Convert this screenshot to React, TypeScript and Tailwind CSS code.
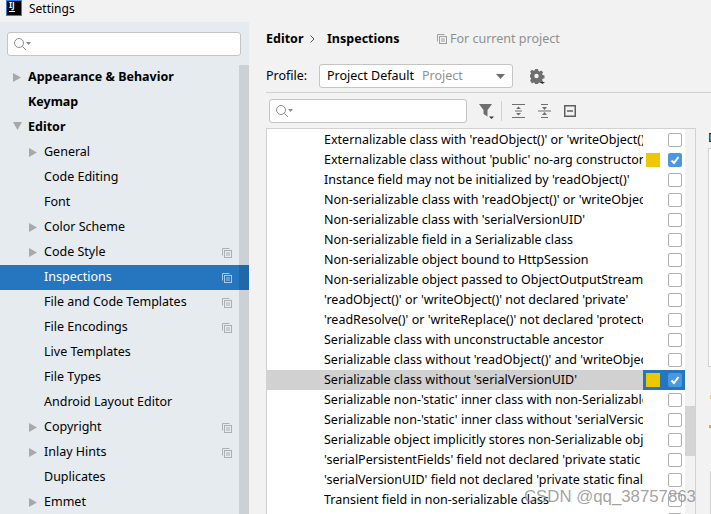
const font = { fontFamily: '"Noto Sans", sans-serif' };

type NavItem = { label: string; arrow?: "right" | "down"; copy?: boolean; bold?: boolean; active?: boolean };

const nav: NavItem[] = [
  { label: "Appearance & Behavior", arrow: "right", bold: true },
  { label: "Keymap", bold: true },
  { label: "Editor", arrow: "down", bold: true },
  { label: "General", arrow: "right" },
  { label: "Code Editing" },
  { label: "Font" },
  { label: "Color Scheme", arrow: "right" },
  { label: "Code Style", arrow: "right", copy: true },
  { label: "Inspections", copy: true, active: true },
  { label: "File and Code Templates", copy: true },
  { label: "File Encodings", copy: true },
  { label: "Live Templates" },
  { label: "File Types" },
  { label: "Android Layout Editor" },
  { label: "Copyright", arrow: "right", copy: true },
  { label: "Inlay Hints", arrow: "right", copy: true },
  { label: "Duplicates" },
  { label: "Emmet", arrow: "right" },
];

const rows = [
  { text: "Externalizable class with 'readObject()' or 'writeObject()'" },
  { text: "Externalizable class without 'public' no-arg constructor", on: true },
  { text: "Instance field may not be initialized by 'readObject()'" },
  { text: "Non-serializable class with 'readObject()' or 'writeObject()'" },
  { text: "Non-serializable class with 'serialVersionUID'" },
  { text: "Non-serializable field in a Serializable class" },
  { text: "Non-serializable object bound to HttpSession" },
  { text: "Non-serializable object passed to ObjectOutputStream" },
  { text: "'readObject()' or 'writeObject()' not declared 'private'" },
  { text: "'readResolve()' or 'writeReplace()' not declared 'protected'" },
  { text: "Serializable class with unconstructable ancestor" },
  { text: "Serializable class without 'readObject()' and 'writeObject()'" },
  { text: "Serializable class without 'serialVersionUID'", on: true, selected: true },
  { text: "Serializable non-'static' inner class with non-Serializable outer" },
  { text: "Serializable non-'static' inner class without 'serialVersionUID'" },
  { text: "Serializable object implicitly stores non-Serializable object" },
  { text: "'serialPersistentFields' field not declared 'private static final'" },
  { text: "'serialVersionUID' field not declared 'private static final long'" },
  { text: "Transient field in non-serializable class" },
  { text: "" },
];

function CopyIcon({ color = "#a9b0b6" }: { color?: string }) {
  return (
    <svg width="10" height="10" viewBox="0 0 10 10" fill="none" stroke={color}>
      <path d="M0.5 7.500V0.500H7.500" />
      <rect x="2.500" y="2.500" width="7" height="7" />
      <path d="M4 5H8M4 7H8" />
    </svg>
  );
}

function SearchIcon() {
  return (
    <svg width="18" height="14" viewBox="0 0 18 14" fill="none" stroke="#8c8c8c">
      <circle cx="6" cy="6" r="4.500" />
      <path d="M9.500 9.500L13 13" />
      <path d="M13 5h5l-2.500 3z" fill="#8c8c8c" stroke="none" />
    </svg>
  );
}

function Checkbox({ on }: { on?: boolean }) {
  if (on) {
    return (
      <div className="flex h-[14px] w-[14px] items-center justify-center rounded-[2px] bg-[#4a98e3]">
        <svg width="10" height="10" viewBox="0 0 10 10" fill="none" stroke="#ffffff" strokeWidth="2">
          <path d="M1.500 5.500L4 8L8.500 2" />
        </svg>
      </div>
    );
  }
  return <div className="h-[14px] w-[14px] rounded-[2px] border border-[#b0b0b0] bg-white" />;
}

export default function App() {
  return (
    <div className="relative flex h-[514px] w-[711px] flex-col overflow-hidden bg-[#f2f2f2] text-[12.5px] text-black" style={font}>
      {/* Title bar */}
      <div className="flex h-[22px] items-center gap-[7px] pl-[6px]">
        <div className="mb-[6px] flex h-[16px] w-[16px] flex-col border border-[#2f7fd6] bg-black px-[2px] text-white">
          <span className="text-[8px] font-bold leading-[8px]">IJ</span>
          <span className="mt-[2px] h-px w-[6px] bg-white" />
        </div>
        <span className="mb-[4px] text-[12px]">Settings</span>
      </div>

      <div className="flex min-h-0 flex-1">
        {/* Sidebar */}
        <div className="flex w-[249px] shrink-0 flex-col bg-[#e6ebf0]">
          <div className="flex h-[43px] items-start px-[7px] pt-[10px]">
            <div className="flex h-[24px] w-[234px] items-center rounded-[3px] border border-[#c4c4c4] bg-white pl-[5px]">
              <SearchIcon />
            </div>
          </div>
          <div className="relative min-h-0 flex-1">
            {nav.map((item) => (
              <NavRow key={item.label} item={item} />
            ))}
            {/* scrollbar sits over the rows */}
            <div className="absolute bottom-0 right-0 top-0 w-[10px] bg-black/[0.11]" />
          </div>
        </div>

        {/* Main */}
        <div className="flex min-w-0 flex-1 flex-col">
          <div className="flex h-[30px] items-end pl-[17px] leading-[26px]">
            <span className="w-[44px] font-bold">Editor</span>
            <span className="mb-[9px] w-[17px]">
              <svg width="5" height="8" viewBox="0 0 5 8" fill="none" stroke="#555555">
                <path d="M.500 .500L4 4L.500 7.500" />
              </svg>
            </span>
            <span className="w-[110px] font-bold">Inspections</span>
            <span className="mb-[8px] mr-[3px]">
              <CopyIcon color="#a0a0a0" />
            </span>
            <span className="text-[#8f8f8f]">For current project</span>
          </div>

          <div className="mt-[12px] flex h-[24px] items-center pl-[17px]">
            <span className="w-[53px] pt-px">Profile:</span>
            <div className="flex h-[24px] w-[194px] items-center rounded-[3px] border border-[#c4c4c4] bg-white pl-[7px]">
              <span className="pt-px">Project Default</span>
              <span className="ml-[8px] pt-px text-[#8f8f8f]">Project</span>
              <svg className="ml-auto mr-[7px]" width="9" height="5" viewBox="0 0 9 5">
                <path d="M0 0h9L4.500 5z" fill="#6e6e6e" />
              </svg>
            </div>
            <svg className="ml-[17px]" width="15" height="15" viewBox="0 0 15 15">
              <path
                d="M5.200 0h2.800l.4 1.900 1.200.5 1.600-1 1.900 1.900-1 1.600.5 1.200 1.900.4v2.800l-1.900.4-.5 1.200 1 1.600-1.900 1.900-1.600-1-1.200.5-.4 1.700H5.200l-.4-1.700-1.200-.5-1.600 1L.1 11.400l1-1.600-.5-1.200L0 8.400V5.800l.6-.4.500-1.200-1-1.600L2 .7l1.600 1 1.200-.5z"
                fill="#6e6e6e"
              />
              <circle cx="6.500" cy="7" r="2.200" fill="#f2f2f2" />
              <path d="M10 13h5l-2.500 2z" fill="#333333" />
            </svg>
          </div>

          <div className="ml-[17px] mt-[4px] h-px bg-[#d1d1d1]" />

          <div className="mt-[6px] flex h-[24px] items-center pl-[20px]">
            <div className="flex h-[24px] w-[198px] items-center rounded-[3px] border border-[#c4c4c4] bg-white pl-[5px]">
              <SearchIcon />
            </div>
            <svg className="ml-[12px]" width="15" height="15" viewBox="0 0 15 15">
              <path d="M0 0h13L8.500 6v6.500l-4-2.500V6z" fill="#6e6e6e" />
              <path d="M10 12.500h5L12.500 15z" fill="#333333" />
            </svg>
            <div className="ml-[7px] h-[20px] w-px bg-[#d1d1d1]" />
            <svg className="ml-[10px]" width="13" height="14" viewBox="0 0 13 14" fill="none" stroke="#6e6e6e">
              <path d="M0 .500h13M0 13.500h13M3 7h7" />
              <path d="M6.500 2.500L9 5H4zM6.500 11.500L4 9h5z" fill="#6e6e6e" stroke="none" />
            </svg>
            <svg className="ml-[13px]" width="13" height="14" viewBox="0 0 13 14" fill="none" stroke="#6e6e6e">
              <path d="M0 7h13M3 .500h7M3 13.500h7" />
              <path d="M6.500 6L4 3h5zM6.500 8L9 11H4z" fill="#6e6e6e" stroke="none" />
            </svg>
            <svg className="ml-[13px]" width="12" height="12" viewBox="0 0 12 12" fill="none" stroke="#5f5f5f" strokeWidth="1.500">
              <rect x=".750" y=".750" width="10.500" height="10.500" />
              <path d="M3 6h6" />
            </svg>
          </div>

          {/* Inspection list */}
          <div className="ml-[17px] mt-[5px] flex min-h-0 flex-1">
            <div className="flex w-[430px] shrink-0 border-l border-r border-t border-[#d1d1d1]">
              <div className="w-[418px] shrink-0 overflow-hidden bg-white pt-px">
                {rows.map((row, i) => (
                  <InspectionRow key={i} {...row} />
                ))}
              </div>
              <div className="flex-1 pt-[277px]">
                <div className="h-[50px] bg-[#d4d4d4]" />
              </div>
            </div>
            {/* Description column, cut off by the window edge */}
            <div className="ml-[12px] min-w-0 flex-1 overflow-hidden">
              <div className="h-[20px] whitespace-nowrap leading-[20px]">Description</div>
              <div className="h-[219px] border-l border-t border-b border-[#d1d1d1] bg-white" />
              <div className="ml-[2px] mt-[28px] h-[4px] w-[1px] bg-[#f2c56a]" />
              <div className="ml-[1px] mt-[26px] h-[3px] w-[2px] bg-[#f0a030]" />
              <div className="ml-[2px] mt-[43px] h-[44px] w-[1px] bg-[#d1d1d1]" />
            </div>
          </div>
        </div>
      </div>

      {/* Watermark */}
      <div
        className="pointer-events-none absolute left-[524px] top-[487px] text-[16.800px] leading-[20px] text-[#8a8a8a]/80"
        style={{ fontFamily: '"Liberation Sans", sans-serif' }}
      >
        CSDN @qq_38757863
      </div>
    </div>
  );
}

function NavRow({ item }: { item: NavItem }) {
  const indent = item.bold ? "pl-[28px]" : "pl-[44px]";
  const arrowLeft = item.bold ? "left-[13px]" : "left-[29px]";
  return (
    <div
      className={`relative flex h-[25px] items-center pr-[17px] ${indent} ${
        item.active ? "bg-[#2675bf] text-white" : ""
      } ${item.bold ? "font-bold" : ""}`}
    >
      {item.arrow === "right" && (
        <svg className={`absolute ${arrowLeft} top-[8px]`} width="8" height="9" viewBox="0 0 8 9">
          <path d="M0 0l8 4.500L0 9z" fill="#a8a8a8" />
        </svg>
      )}
      {item.arrow === "down" && (
        <svg className={`absolute ${arrowLeft} top-[7px]`} width="9" height="8" viewBox="0 0 9 8">
          <path d="M0 0h9L4.500 8z" fill="#a8a8a8" />
        </svg>
      )}
      <span className="flex-1 truncate">{item.label}</span>
      {item.copy && <CopyIcon color={item.active ? "#a9cbe8" : "#a9b0b6"} />}
    </div>
  );
}

function InspectionRow({ text, on, selected }: { text: string; on?: boolean; selected?: boolean }) {
  return (
    <div className={`flex h-[20px] items-center ${selected ? "bg-[#d1d1d1]" : ""}`}>
      <div className="w-[57px] shrink-0" />
      <div className="w-[319px] shrink-0 overflow-hidden whitespace-nowrap leading-[20px]">{text}</div>
      <div className={`flex h-[20px] w-[42px] shrink-0 items-center ${selected ? "bg-[#2675bf]" : ""}`}>
        <div className={`ml-[3px] h-[14px] w-[14px] ${on ? "bg-[#edc800]" : ""}`} />
        <div className="ml-[8px]">
          <Checkbox on={on} />
        </div>
      </div>
    </div>
  );
}
